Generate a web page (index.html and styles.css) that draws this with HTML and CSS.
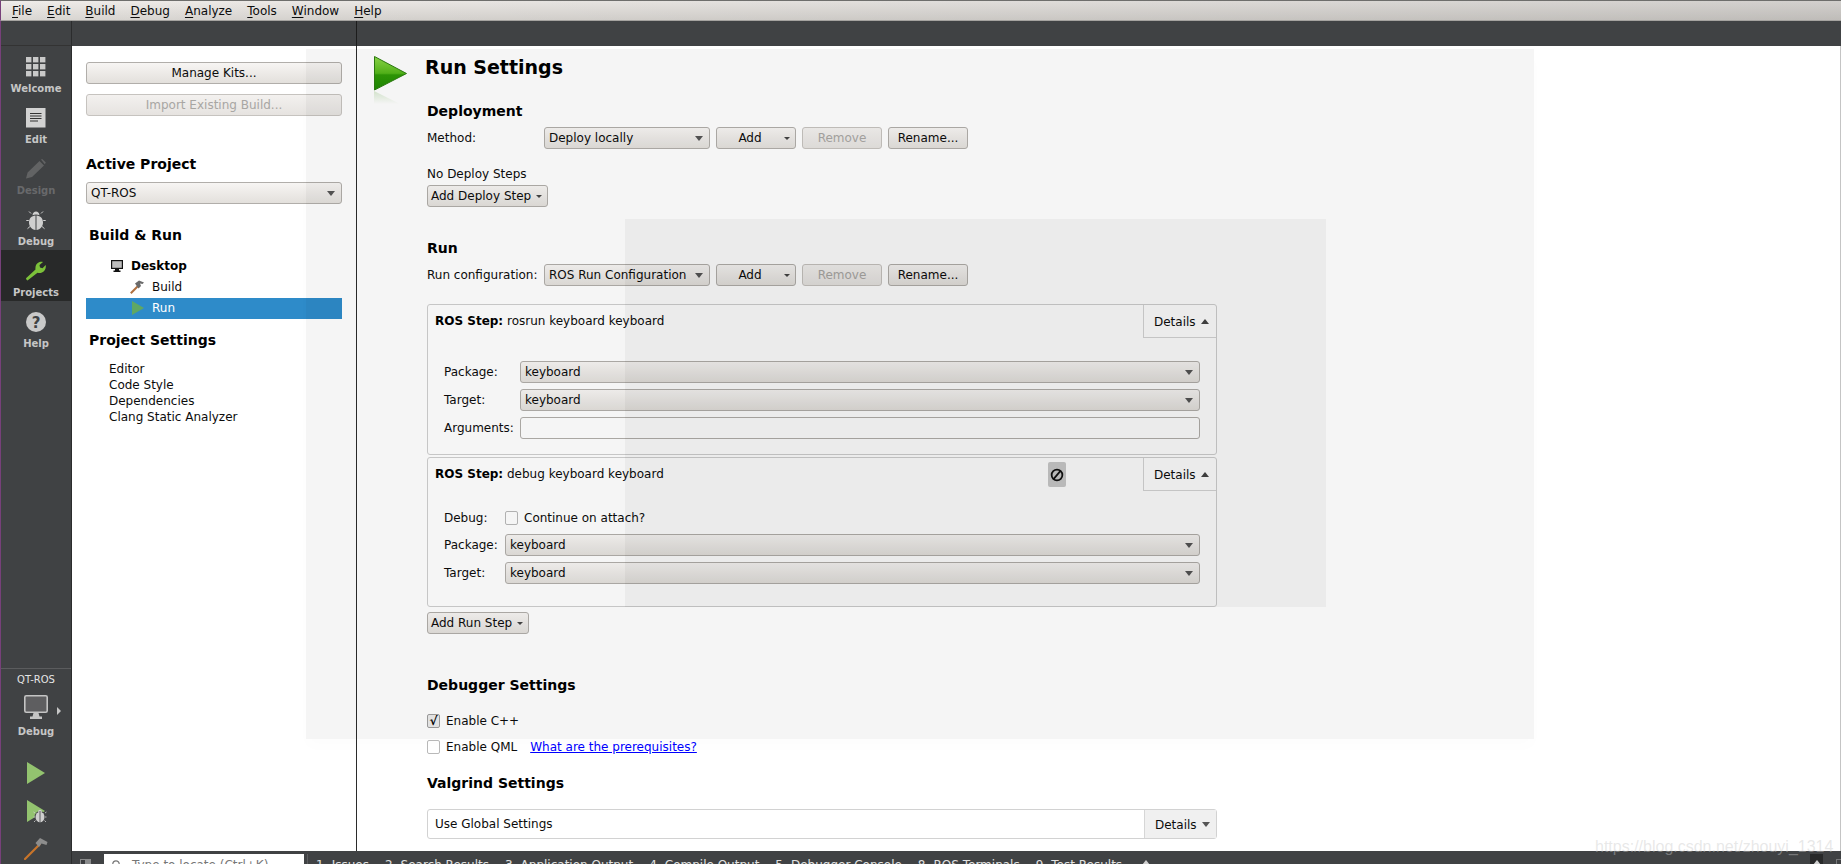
FILE: index.html
```html
<!DOCTYPE html>
<html lang="en">
<head>
<meta charset="utf-8">
<title>Qt Creator - Run Settings</title>
<link rel="stylesheet" href="styles.css">
</head>
<body>
<div class="menubar">
  <span class="menu"><u>F</u>ile</span>
  <span class="menu"><u>E</u>dit</span>
  <span class="menu"><u>B</u>uild</span>
  <span class="menu"><u>D</u>ebug</span>
  <span class="menu"><u>A</u>nalyze</span>
  <span class="menu"><u>T</u>ools</span>
  <span class="menu"><u>W</u>indow</span>
  <span class="menu"><u>H</u>elp</span>
</div>
<div class="app">
  <aside class="sidebar">
    <div class="side-top"></div>
    <nav class="modes">
      <div class="mode">
        <svg class="mode-icon" viewBox="0 0 20 20"><g fill="#c9c9c9"><rect x="0" y="0" width="5.4" height="5.4"/><rect x="7" y="0" width="5.4" height="5.4"/><rect x="14" y="0" width="5.4" height="5.4"/><rect x="0" y="7" width="5.4" height="5.4"/><rect x="7" y="7" width="5.4" height="5.4"/><rect x="14" y="7" width="5.4" height="5.4"/><rect x="0" y="14" width="5.4" height="5.4"/><rect x="7" y="14" width="5.4" height="5.4"/><rect x="14" y="14" width="5.4" height="5.4"/></g></svg>
        <span>Welcome</span>
      </div>
      <div class="mode">
        <svg class="mode-icon" viewBox="0 0 20 20"><rect width="19.5" height="19.5" fill="#d2d2d2"/><path d="M4 5.500h11.500M4 8h11.500M4 10.500h11.500M4 13h8" stroke="#333" stroke-width="1"/></svg>
        <span>Edit</span>
      </div>
      <div class="mode mode-off">
        <svg class="mode-icon" viewBox="0 0 20 20"><path d="M0 19.500l1.600-6L13.500 2l4.500 4.500L6 18z M15 .5l1.200-.5 3.600 3.600-1 1.600z" fill="#626364"/></svg>
        <span>Design</span>
      </div>
      <div class="mode">
        <svg class="mode-icon" viewBox="0 0 20 20"><g fill="#cfcfcf"><path d="M9.500 5.500C5.500 5.800 3 8.500 3 12.500c0 4 2.800 7 6.500 7.500zM10.500 5.500c4 .3 6.500 3 6.500 7 0 4-2.800 7-6.500 7.500z"/><path d="M6.500 5.200C6.800 2.800 8.200 1.500 10 1.500s3.200 1.300 3.500 3.700c-2-1-5-1-7 0z"/></g><path d="M5 3.500L3 1.500M15 3.500l2-2M2.800 10.500H.3M17.200 10.500h2.500M4 16.500l-2.500 2.200M16 16.500l2.500 2.200" stroke="#cfcfcf" stroke-width="1" fill="none"/></svg>
        <span>Debug</span>
      </div>
      <div class="mode mode-on">
        <svg class="mode-icon" viewBox="0 0 20 20"><path d="M1.500 19.500c-1-.6-1.500-1.400-1.500-2.200L9.500 8.500C9 5 10.500 2 13.500 1c1.300-.4 2.500-.4 3.500 0l-3.500 3 .5 2.500 2.500.8L19.700 4c.6 3.200-.7 6-3.700 7.500-1.800.8-3.200.7-4.500.2z" fill="#7cc13a"/></svg>
        <span>Projects</span>
      </div>
      <div class="mode">
        <svg class="mode-icon" viewBox="0 0 20 20"><circle cx="10" cy="10" r="10" fill="#c9c9c9"/><text x="10" y="15.500" class="help-mark">?</text></svg>
        <span>Help</span>
      </div>
    </nav>
    <div class="side-target">
      <div class="target-name">QT-ROS</div>
      <div class="target-monitor">
        <svg class="monitor" viewBox="0 0 24 24"><rect x=".8" y=".8" width="22.400" height="16.400" rx="1.500" fill="#5e5e60" stroke="#c4c4c4" stroke-width="1.600"/><path d="M9.500 18h5l1 3.500h2.500V24H6v-2.500h2.500z" fill="#c4c4c4"/></svg>
        <span class="target-caret"></span>
      </div>
      <div class="target-label">Debug</div>
      <svg class="act-run" viewBox="0 0 18 22"><path d="M0 0l18 11L0 22z" fill="#93c36f"/></svg>
      <svg class="act-debug" viewBox="0 0 20 23"><path d="M0 0l18 11L0 22z" fill="#93c36f"/><ellipse cx="13" cy="17" rx="5.500" ry="6" fill="#404244"/><ellipse cx="13" cy="17" rx="4.500" ry="5.200" fill="#cfcfcf"/><circle cx="13" cy="11.500" r="1.800" fill="#cfcfcf"/><path d="M13 11v11" stroke="#404244" stroke-width=".8"/><path d="M8 13l-1.500-1M18 13l1.500-1M8 17H6.500M18 17h1.500M8.500 20.500L7 22M17.500 20.500L19 22" stroke="#cfcfcf" stroke-width=".8" fill="none"/></svg>
      <svg class="act-build" viewBox="0 0 24 22"><path d="M1 21L15.500 6.500" stroke="#c8742a" stroke-width="2.200" stroke-linecap="round"/><path d="M11.500 5L16 0l7.500 4-1 3-5-1.500L15 9z" fill="#8d8d8d"/></svg>
    </div>
  </aside>
  <div class="workspace">
    <div class="toolbar"><div class="toolbar-left"></div></div>
    <div class="main">
      <section class="nav-panel">
        <div class="btn btn-wide">Manage Kits...</div>
        <div class="btn btn-wide btn-off nav-import">Import Existing Build...</div>
        <h3 class="nav-active">Active Project</h3>
        <div class="combo nav-combo"><span>QT-ROS</span><i class="caret"></i></div>
        <h3 class="nav-head nav-build">Build &amp; Run</h3>
        <div class="tree-row tree-kit">
          <svg class="tree-monitor" viewBox="0 0 12 12"><rect x=".6" y=".6" width="10.800" height="7.800" fill="#bdbdbd" stroke="#111" stroke-width="1.200"/><path d="M4 9h4v1.500h1.500V12h-7v-1.500H4z" fill="#111"/></svg>
          <b>Desktop</b>
        </div>
        <div class="tree-row tree-sub">
          <svg class="tree-icon" viewBox="0 0 14 14"><path d="M.8 13.200L8.500 5.500" stroke="#b0703f" stroke-width="2"/><path d="M5 3.500L9 .5l5 2-1.500 1.500-2.500-.5 1 2.500-2.500 2.500z" fill="#6a6a6a"/></svg>
          <span>Build</span>
        </div>
        <div class="tree-row tree-sub tree-selected">
          <svg class="tree-icon tree-play" viewBox="0 0 12 14"><path d="M0 0l12 7-12 7z" fill="#5fa763"/></svg>
          <span>Run</span>
        </div>
        <h3 class="nav-head nav-settings">Project Settings</h3>
        <ul class="settings-list">
          <li>Editor</li>
          <li>Code Style</li>
          <li>Dependencies</li>
          <li>Clang Static Analyzer</li>
        </ul>
      </section>
      <section class="content">
        <header class="page-head">
          <svg class="page-icon" viewBox="0 0 33 48">
            <defs>
              <linearGradient id="playFill" x1="0" y1="0" x2="0" y2="1"><stop offset="0" stop-color="#8fdc4a"/><stop offset=".5" stop-color="#55b71a"/><stop offset=".55" stop-color="#2f9a06"/><stop offset="1" stop-color="#1f8a04"/></linearGradient>
              <linearGradient id="playGlow" x1="0" y1="0" x2="0" y2="1"><stop offset="0" stop-color="#5fa83a" stop-opacity=".22"/><stop offset="1" stop-color="#5fa83a" stop-opacity="0"/></linearGradient>
            </defs>
            <path d="M.5.500L32.500 17.500.5 34z" fill="url(#playFill)" stroke="#2d7d10" stroke-width="1"/>
            <path d="M0 35L26 48H0z" fill="url(#playGlow)"/>
          </svg>
          <h1>Run Settings</h1>
        </header>
        <div class="settings">
          <h2 class="sec-deploy">Deployment</h2>
          <div class="config-row">
            <label class="config-label">Method:</label>
            <div class="combo config-combo"><span>Deploy locally</span><i class="caret"></i></div>
            <div class="btn btn-menu">Add<i class="caret-small"></i></div>
            <div class="btn btn-plain btn-off">Remove</div>
            <div class="btn btn-plain">Rename...</div>
          </div>
          <p class="no-steps">No Deploy Steps</p>
          <div class="btn btn-step add-deploy">Add Deploy Step<i class="caret-small"></i></div>
          <h2 class="sec-run">Run</h2>
          <div class="config-row">
            <label class="config-label">Run configuration:</label>
            <div class="combo config-combo"><span>ROS Run Configuration</span><i class="caret"></i></div>
            <div class="btn btn-menu">Add<i class="caret-small"></i></div>
            <div class="btn btn-plain btn-off">Remove</div>
            <div class="btn btn-plain">Rename...</div>
          </div>
          <div class="step step-first">
            <div class="step-head">
              <span class="step-title"><b>ROS Step:</b> rosrun keyboard keyboard</span>
              <div class="details">Details<i class="tri-up"></i></div>
            </div>
            <div class="form form-first">
              <label>Package:</label>
              <div class="combo"><span>keyboard</span><i class="caret"></i></div>
              <label>Target:</label>
              <div class="combo"><span>keyboard</span><i class="caret"></i></div>
              <label>Arguments:</label>
              <div class="input"></div>
            </div>
          </div>
          <div class="step step-second">
            <div class="step-head">
              <span class="step-title"><b>ROS Step:</b> debug keyboard keyboard</span>
              <div class="disable-btn">
                <svg viewBox="0 0 12 12"><circle cx="6" cy="6" r="4.600" fill="none" stroke="#111" stroke-width="1.500"/><path d="M3 9.500L9 2.500" stroke="#111" stroke-width="1.500"/></svg>
              </div>
              <div class="details">Details<i class="tri-up"></i></div>
            </div>
            <div class="debug-row">
              <label>Debug:</label>
              <i class="check"></i>
              <span>Continue on attach?</span>
            </div>
            <div class="form form-second">
              <label>Package:</label>
              <div class="combo"><span>keyboard</span><i class="caret"></i></div>
              <label>Target:</label>
              <div class="combo"><span>keyboard</span><i class="caret"></i></div>
            </div>
          </div>
          <div class="btn btn-step add-run">Add Run Step<i class="caret-small"></i></div>
          <h2 class="sec-debugger">Debugger Settings</h2>
          <div class="check-row check-cpp"><i class="check check-on">√</i><span>Enable C++</span></div>
          <div class="check-row check-qml"><i class="check"></i><span>Enable QML</span><a class="link">What are the prerequisites?</a></div>
          <h2 class="sec-valgrind">Valgrind Settings</h2>
          <div class="valgrind">
            <span>Use Global Settings</span>
            <div class="details details-closed">Details<i class="tri-down"></i></div>
          </div>
        </div>
      </section>
    </div>
    <footer class="status">
      <svg class="status-toggle" viewBox="0 0 11 11"><rect width="11" height="11" fill="#8a8b8c"/><rect x="1" y="1" width="4" height="9" fill="#3d3e40"/></svg>
      <div class="locator"><svg viewBox="0 0 10 10"><circle cx="4" cy="4" r="3.200" fill="none" stroke="#777" stroke-width="1.200"/><path d="M6.500 6.500L9.500 9.500" stroke="#777" stroke-width="1.200"/></svg><span>Type to locate (Ctrl+K)</span></div>
      <div class="panes">
        <span class="pane"><b>1</b>Issues</span>
        <span class="pane"><b>2</b>Search Results</span>
        <span class="pane"><b>3</b>Application Output</span>
        <span class="pane"><b>4</b>Compile Output</span>
        <span class="pane"><b>5</b>Debugger Console</span>
        <span class="pane"><b>8</b>ROS Terminals</span>
        <span class="pane"><b>9</b>Test Results</span>
        <i class="pane-more"></i>
      </div>
      <div class="status-end"><i></i></div>
      <div class="status-grip"></div>
    </footer>
  </div>
</div>
<div class="tint tint-outer"></div>
<div class="tint tint-inner"></div>
<div class="watermark">https://blog.csdn.net/zhouyi_1314</div>
</body>
</html>
```
FILE: styles.css
```css
* { box-sizing: border-box; }
html, body { margin: 0; padding: 0; }
body {
  position: relative;
  width: 1841px;
  height: 864px;
  overflow: hidden;
  display: flex;
  flex-direction: column;
  background: #fff;
  color: #0c0c0c;
  font: 12px/16px "DejaVu Sans", sans-serif;
}
h1, h2, h3, p, ul { margin: 0; padding: 0; }
i { font-style: normal; }

/* menu */
.menubar {
  height: 21px;
  flex: none;
  display: flex;
  padding: 1px 0 0 11px;
  gap: 15px;
  align-items: center;
  border-top: 1px solid #6e6e6c;
  border-left: 1px solid #77407a;
  background:
    linear-gradient(90deg, rgba(0, 0, 0, 0), rgba(0, 0, 0, .12)),
    linear-gradient(#efecE9, #d9d6d2);
  border-bottom: 1px solid #a5a3a0;
}
.menu u { text-underline-offset: 2px; }

.app { flex: 1; display: flex; min-height: 0; }

/* mode sidebar */
.sidebar {
  width: 72px;
  flex: none;
  display: flex;
  flex-direction: column;
  background: #404244;
  border-left: 1px solid #77407a;
  border-right: 1px solid #2b2c2d;
  color: #c6c6c6;
}
.side-top { height: 25px; flex: none; border-bottom: 1px solid #333; }
.modes { display: flex; flex-direction: column; }
.mode {
  height: 51px;
  display: flex;
  flex-direction: column;
  align-items: center;
  padding-top: 11px;
  font-size: 10px;
  font-weight: bold;
  line-height: 12px;
  gap: 6px;
}
.mode-icon { width: 20px; height: 20px; display: block; flex: none; }
.mode-off { color: #68696b; }
.mode-on { background: #282929; }
.help-mark { font: bold 15px "DejaVu Sans", sans-serif; fill: #404244; text-anchor: middle; }

.side-target {
  margin-top: auto;
  position: relative;
  height: 196px;
  flex: none;
  border-top: 1px solid #5b5c5e;
  display: flex;
  flex-direction: column;
  align-items: center;
}
.target-name { margin-top: 5px; font-size: 10px; line-height: 12px; color: #e4e4e4; flex: none; }
.target-monitor { margin-top: 9px; display: flex; position: relative; flex: none; }
.monitor { width: 24px; height: 24px; display: block; }
.target-caret {
  position: absolute;
  left: 33px; top: 12px;
  border-left: 4px solid #c6c6c6;
  border-top: 4px solid transparent;
  border-bottom: 4px solid transparent;
}
.target-label { margin-top: 7px; font-size: 10px; font-weight: bold; line-height: 12px; flex: none; }
.act-run { width: 18px; height: 22px; margin-top: 24px; display: block; flex: none; }
.act-debug { width: 20px; height: 23px; margin-top: 16px; margin-left: 2px; display: block; flex: none; }
.act-build { width: 24px; height: 22px; margin-top: 15px; display: block; flex: none; }

/* workspace */
.workspace { flex: 1; min-width: 0; display: flex; flex-direction: column; }
.toolbar { height: 25px; flex: none; background: #404244; }
.toolbar-left { width: 285px; height: 25px; border-right: 1px solid #1c1c1c; }
.main { flex: 1; min-height: 0; display: flex; }

/* left project panel */
.nav-panel {
  width: 285px;
  flex: none;
  padding: 16px 14px 0;
  border-right: 1px solid #2b2b2b;
  background: #fff;
}
.nav-panel h3 { font-size: 14px; line-height: 20px; font-weight: bold; color: #000; }
.nav-import { margin-top: 10px; }
.nav-active { margin-top: 38px; }
.nav-combo { margin-top: 8px; }
.nav-head { padding-left: 3px; }
.nav-build { margin-top: 21px; }
.nav-settings { margin-top: 11px; }
.tree-row { height: 21px; display: flex; align-items: center; padding-bottom: 2px; }
.tree-row b { color: #000; }
.tree-kit { margin-top: 11px; padding-left: 25px; gap: 8px; }
.tree-monitor { width: 12px; height: 12px; display: block; }
.tree-sub { padding-left: 44px; gap: 8px; }
.tree-icon { width: 14px; height: 14px; display: block; }
.tree-play { width: 12px; margin-left: 2px; }
.tree-selected { background: #2e8bc9; color: #fff; }
.settings-list { list-style: none; margin-top: 11px; padding-left: 23px; }
.settings-list li { height: 16px; line-height: 16px; }

/* controls */
.btn, .combo, .input {
  height: 22px;
  border: 1px solid #b1aeaa;
  border-radius: 3px;
  display: flex;
  align-items: center;
  white-space: nowrap;
}
.btn, .combo { background: linear-gradient(#f7f5f3, #e3e0dc); }
.btn { justify-content: center; position: relative; }
.btn-off { color: #a8a6a3; border-color: #c6c3bf; background: linear-gradient(#f3f1ef, #e6e3e0); }
.combo { position: relative; padding-left: 4px; }
.caret {
  position: absolute;
  right: 6px; top: 8px;
  border-top: 5px solid #555;
  border-left: 4px solid transparent;
  border-right: 4px solid transparent;
}
.caret-small {
  position: absolute;
  right: 5px; top: 9px;
  border-top: 3px solid #444;
  border-left: 3px solid transparent;
  border-right: 3px solid transparent;
}
.input { background: #fff; }

/* content panel */
.content { flex: 1; min-width: 0; padding: 10px 0 0 17px; border-right: 1px solid #c4c4c4; }
.page-head { height: 44px; display: flex; align-items: flex-start; }
.page-icon { width: 33px; height: 48px; flex: none; display: block; }
.page-head h1 { font-size: 19px; line-height: 22px; font-weight: bold; color: #000; margin: 0 0 0 18px; }
.settings { width: 790px; margin-left: 53px; }
.settings h2 { font-size: 14px; line-height: 20px; font-weight: bold; color: #000; }
.sec-deploy { margin-top: 1px; }
.sec-run { margin-top: 31px; }
.sec-debugger { margin-top: 41px; }
.sec-valgrind { margin-top: 19px; }

.config-row { margin-top: 6px; display: flex; align-items: center; }
.config-label { width: 117px; flex: none; }
.config-combo { width: 166px; margin-right: 6px; }
.btn-menu { width: 80px; padding-right: 12px; margin-right: 6px; }
.btn-plain { width: 80px; margin-right: 6px; }
.no-steps { margin-top: 17px; }
.btn-step { justify-content: flex-start; padding-left: 3px; }
.add-deploy { width: 121px; margin-top: 3px; }
.add-run { width: 102px; margin-top: 5px; }

.step { border: 1px solid #cfcfcf; border-radius: 3px; }
.step-first { margin-top: 18px; height: 151px; }
.step-second { margin-top: 2px; height: 150px; }
.step-head { height: 33px; display: flex; align-items: center; padding-left: 7px; }
.step-title { padding-bottom: 2px; }
.step-title b { color: #000; }
.details {
  width: 73px;
  height: 33px;
  flex: none;
  margin-left: auto;
  display: flex;
  align-items: center;
  padding: 1px 0 0 10px;
  gap: 5px;
  border-left: 1px solid #d6d6d6;
  border-bottom: 1px solid #d6d6d6;
}
.tri-up { border-bottom: 5px solid #444; border-left: 4.5px solid transparent; border-right: 4.5px solid transparent; }
.tri-down { border-top: 5px solid #555; border-left: 4.5px solid transparent; border-right: 4.5px solid transparent; }
.disable-btn {
  width: 18px;
  height: 25px;
  margin-left: auto;
  background: #c9c9c9;
  border-radius: 2px;
  display: flex;
  align-items: center;
  justify-content: center;
}
.disable-btn svg { width: 14px; height: 14px; display: block; }
.disable-btn + .details { margin-left: 77px; }
.form { display: grid; row-gap: 6px; padding: 0 16px; align-items: center; }
.form-first { margin-top: 23px; grid-template-columns: 76px 1fr; }
.form-second { margin-top: 9px; grid-template-columns: 61px 1fr; }
.debug-row { margin-top: 20px; padding-left: 16px; display: flex; align-items: center; height: 14px; }
.debug-row label { width: 61px; flex: none; }
.debug-row span { margin-left: 6px; }
.check {
  width: 13px;
  height: 14px;
  flex: none;
  background: #fff;
  border: 1px solid #b9b9b9;
  border-radius: 2px;
  display: flex;
  align-items: center;
  justify-content: center;
  font-size: 12px;
  font-weight: bold;
  line-height: 1;
  color: #000;
}
.check-on { background: #ececec; border-color: #9f9f9f; }
.check-row { display: flex; align-items: center; height: 14px; }
.check-row span { margin-left: 6px; }
.check-cpp { margin-top: 19px; }
.check-qml { margin-top: 12px; }
.link { margin-left: 13px; color: #0000ff; text-decoration: underline; }
.valgrind {
  margin-top: 16px;
  height: 30px;
  border: 1px solid #d2d2d2;
  border-radius: 3px;
  display: flex;
  align-items: center;
  padding-left: 7px;
}
.details-closed {
  height: 28px;
  width: 72px;
  background: #f0f0f0;
  border-bottom: 0;
}

/* status bar */
.status {
  height: 13px;
  flex: none;
  background: #404244;
  color: #e2e2e2;
  display: flex;
  overflow: hidden;
  position: relative;
}
.status-toggle { width: 11px; height: 11px; margin: 8px 0 0 8px; flex: none; display: block; }
.locator {
  width: 200px;
  height: 20px;
  margin: 3px 0 0 13px;
  flex: none;
  background: #fff;
  color: #777;
  display: flex;
  padding: 3px 0 0 8px;
  gap: 10px;
}
.locator svg { width: 10px; height: 10px; margin-top: 3px; flex: none; display: block; }
.panes {
  margin: 3px 0 0 3px;
  padding: 3px 0 0 8px;
  border-left: 1px solid #5c5d5f;
  height: 20px;
  display: flex;
  gap: 16px;
  white-space: nowrap;
}
.pane b { font-weight: normal; margin-right: 8px; }
.pane-more {
  margin: 3px 0 0 4px;
  border-bottom: 5px solid #d0d0d0;
  border-left: 4px solid transparent;
  border-right: 4px solid transparent;
  height: 0;
}
.status-end {
  margin: 3px 13px 0 auto;
  width: 13px;
  height: 20px;
  background: #28292a;
  display: flex;
  justify-content: center;
  padding-top: 6px;
  flex: none;
}
.status-end i {
  height: 0;
  border-bottom: 5px solid #d0d0d0;
  border-left: 4px solid transparent;
  border-right: 4px solid transparent;
}
.status-grip {
  width: 5px;
  height: 10px;
  margin-top: 8px;
  border: 1px solid #77787a;
  border-right: 0;
  flex: none;
}

/* translucent rectangles lying over the window */
.tint { position: absolute; pointer-events: none; }
.tint-outer {
  left: 306px; top: 49px; width: 1228px; height: 690px;
  background: rgba(0, 0, 0, .04);
  box-shadow: 0 8px 14px rgba(0, 0, 0, .012);
}
.tint-inner {
  left: 625px; top: 219px; width: 701px; height: 388px;
  background: rgba(0, 0, 0, .04);
}
.watermark {
  position: absolute;
  left: 1595px; top: 838px;
  font: 16px/18px "Liberation Sans", sans-serif;
  color: rgba(200, 200, 200, .42);
  white-space: nowrap;
}
```
